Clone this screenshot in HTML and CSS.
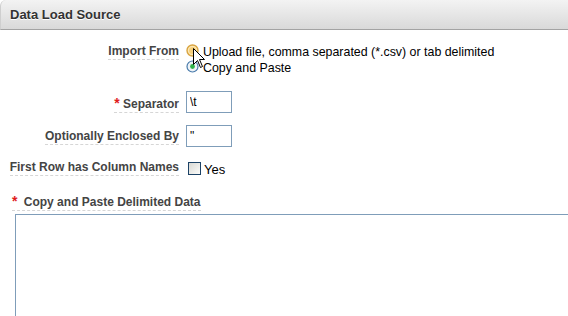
FILE: index.html
```html
<!DOCTYPE html>
<html lang="en">
<head>
    <meta charset="UTF-8">
    <title>Data Load Source</title>
    <link rel="stylesheet" href="styles.css">
</head>
<body>
    <div class="region">
        <div class="region-head"><h2>Data Load Source</h2></div>
        <div class="region-body">
            <div class="field" id="row-import">
                <div class="lbl"><span>Import From</span></div>
                <div class="ctrl radios">
                    <div class="radio-row">
                        <svg class="radio" width="13" height="13" viewBox="0 0 13 13">
                            <circle cx="6.5" cy="6.5" r="5.5" fill="#fbe7b4" stroke="#d9a440" stroke-width="1.4"/>
                            <circle cx="6.5" cy="6.5" r="3.5" fill="#f6cf7a"/>
                        </svg>
                        <span>Upload file, comma separated (*.csv) or tab delimited</span>
                    </div>
                    <div class="radio-row">
                        <svg class="radio" width="13" height="13" viewBox="0 0 13 13">
                            <circle cx="6.5" cy="6.5" r="5.5" fill="#eef3f7" stroke="#4a7bab" stroke-width="1.2"/>
                            <circle cx="6.5" cy="6.5" r="2.4" fill="#2fb34a"/>
                        </svg>
                        <span>Copy and Paste</span>
                    </div>
                    <svg class="cursor" width="13" height="21" viewBox="0 0 13 21">
                        <path d="M0.5 0.5 L0.5 16.5 L4.5 12.5 L7.5 19.5 L9.5 18.5 L6.5 11.5 L11.5 11.5 Z" fill="#fff" stroke="#000" stroke-width="1"/>
                    </svg>
                </div>
            </div>
            <div class="field" id="row-sep">
                <div class="lbl"><span><b class="req">*</b> Separator</span></div>
                <div class="ctrl"><input class="txt" type="text" value="\t"></div>
            </div>
            <div class="field" id="row-encl">
                <div class="lbl"><span>Optionally Enclosed By</span></div>
                <div class="ctrl"><input class="txt" type="text" value="&quot;"></div>
            </div>
            <div class="field" id="row-first">
                <div class="lbl"><span>First Row has Column Names</span></div>
                <div class="ctrl check"><i class="box"></i><span>Yes</span></div>
            </div>
            <div class="area">
                <div class="area-lbl"><span><b class="req">*</b> Copy and Paste Delimited Data</span></div>
                <textarea class="paste"></textarea>
            </div>
        </div>
    </div>
</body>
</html>
```

FILE: styles.css
```css
*{
    padding: 0;
    margin: 0;
    box-sizing: border-box;
}
body{
    background: #fff;
    font-family: "Liberation Sans", Arial, sans-serif;
    font-size: 12px;
    color: #000;
    overflow: hidden;
}
.region-head{
    height: 30px;
    background: linear-gradient(#f3f3f3, #d9d9d9);
    border-bottom: 1px solid #a3a3a3;
    border-top-left-radius: 6px;
    border-left: 1px solid #cfcfcf;
}
.region-head h2{
    font-size: 13px;
    font-weight: bold;
    color: #333;
    line-height: 29px;
    padding-left: 9px;
    text-shadow: 0 1px 0 #fff;
}
.region-body{
    padding-top: 13px;
}
.field{
    display: grid;
    grid-template-columns: 179px 1fr;
    column-gap: 7px;
}
.lbl{
    text-align: right;
    font-weight: bold;
    color: #444;
    white-space: nowrap;
}
.lbl span, .area-lbl span{
    border-bottom: 1px dashed #d6d6d6;
    padding-bottom: 1px;
}
.req{
    color: #e01c1c;
    font-size: 14px;
}
#row-import .lbl{
    padding-top: 1px;
}
.radios{
    position: relative;
}
.radio-row{
    display: flex;
    align-items: flex-start;
    height: 16px;
    font-size: 12.4px;
}
.radio-row .radio{
    margin-right: 5px;
    margin-top: 1px;
}
.radio-row span{
    line-height: 19px;
    margin-left: -1px;
}
.cursor{
    position: absolute;
    left: 7px;
    top: 5px;
}
#row-sep{
    margin-top: 16px;
}
#row-sep .lbl, #row-encl .lbl{
    padding-top: 4px;
}
#row-encl{
    margin-top: 12px;
}
.txt{
    width: 46px;
    height: 22px;
    border: 1px solid #7f9db9;
    font-family: "Liberation Sans", Arial, sans-serif;
    font-size: 12px;
    padding: 0 3px;
    color: #000;
}
#row-first{
    margin-top: 11px;
}
#row-first .lbl{
    padding-top: 2px;
}
.check{
    display: flex;
    align-items: center;
}
.check .box{
    display: block;
    width: 13px;
    height: 13px;
    border: 1px solid #1c4266;
    background: linear-gradient(135deg, #d8d8d3, #fbfbf9);
    margin-left: 2px;
    margin-right: 3px;
    margin-top: 1px;
}
.check span{
    font-size: 13px;
    margin-top: 4px;
}
.area{
    margin-top: 16px;
    padding-left: 12px;
}
.area-lbl{
    font-weight: bold;
    color: #444;
}
.area-lbl .req{
    margin-right: 3px;
}
.paste{
    display: block;
    width: 580px;
    height: 140px;
    margin-left: 3px;
    margin-top: 5px;
    border: 1px solid #7f9db9;
    resize: none;
}
```
